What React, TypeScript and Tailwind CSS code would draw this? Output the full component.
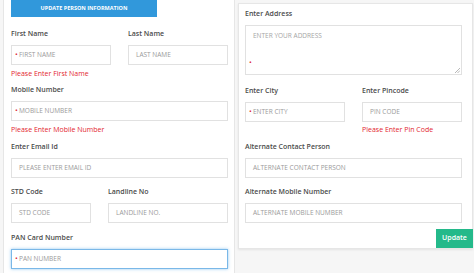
import React from "react";

// ─── Small pieces ────────────────────────────────────────────────────────────

const FONT = { fontFamily: "'Open Sans', 'Noto Sans', sans-serif" };

function Label({ children }: { children: React.ReactNode }) {
  return (
    <div className="h-[12px] leading-[12px] mb-[5px] text-[7px] font-semibold text-[#4b4b4b] whitespace-nowrap">
      {children}
    </div>
  );
}

function Field({
  placeholder,
  required = false,
  focused = false,
}: {
  placeholder: string;
  required?: boolean;
  focused?: boolean;
}) {
  const border = focused
    ? "border-[#7ab8e8] shadow-[0_0_3px_rgba(102,175,233,0.7)]"
    : "border-[#e1e1e1]";
  return (
    <div
      className={`h-[20px] w-full flex items-center border bg-white text-[6.5px] text-[#9a9a9a] uppercase whitespace-nowrap ${border} ${
        required ? "pl-[3px]" : "pl-[7px]"
      }`}
    >
      {required && <span className="text-[#e0313b] w-[4px] text-[7.5px] leading-none">•</span>}
      <span>{placeholder}</span>
    </div>
  );
}

function Error({ children }: { children: React.ReactNode }) {
  return (
    <div className="mt-[4px] h-[10px] leading-[10px] text-[7px] text-[#e3262f] whitespace-nowrap">
      {children}
    </div>
  );
}

// ─── Main ────────────────────────────────────────────────────────────────────

export default function App() {
  return (
    <div className="w-[474px] h-[273px] overflow-hidden bg-[#f6f6f6] flex gap-[3px] pl-[3px]" style={FONT}>
      {/* Left card */}
      <section className="w-[232px] h-[290px] bg-white border border-t-0 border-[#e6e6e6] pl-[7px] pr-[6px] shrink-0">
        <div className="w-[146px] h-[17px] bg-[#3198db] flex items-center justify-center text-white text-[5.5px] font-bold uppercase">
          Update Person Information
        </div>

        <div className="mt-[11px] grid grid-cols-[100px_100px] gap-x-[17px]">
          <div>
            <Label>First Name</Label>
            <Field placeholder="First Name" required />
          </div>
          <div>
            <Label>Last Name</Label>
            <Field placeholder="Last Name" />
          </div>
        </div>
        <Error>Please Enter First Name</Error>

        <div className="mt-[5px]">
          <Label>Mobile Number</Label>
          <Field placeholder="Mobile Number" required />
          <Error>Please Enter Mobile Number</Error>
        </div>

        <div className="mt-[6px]">
          <Label>Enter Email Id</Label>
          <Field placeholder="Please Enter Email Id" />
        </div>

        <div className="mt-[8px] grid grid-cols-[80px_120px] gap-x-[17px]">
          <div>
            <Label>STD Code</Label>
            <Field placeholder="STD Code" />
          </div>
          <div>
            <Label>Landline No</Label>
            <Field placeholder="Landline No." />
          </div>
        </div>

        <div className="mt-[9px]">
          <Label>PAN Card Number</Label>
          <Field placeholder="Pan Number" required focused />
        </div>
      </section>

      {/* Right card */}
      <section className="mt-[3px] w-[235px] h-[246px] bg-white border border-[#e6e6e6] shadow-[0_1px_2px_rgba(0,0,0,0.08)] pl-[6px] flex flex-col shrink-0">
        <div className="pr-[10px]">
          <div className="mt-[4px]">
            <Label>Enter Address</Label>
            <div className="relative h-[50px] border border-[#e1e1e1] bg-white pl-[7px] pt-[5px] text-[6.5px] text-[#a5a5a5] uppercase">
              Enter your address
              <span className="absolute left-[3px] bottom-[8px] text-[#e0313b] text-[7.5px] leading-none">•</span>
              <svg className="absolute right-[1px] bottom-[1px]" width="5" height="5" viewBox="0 0 5 5">
                <path d="M5 0L0 5M5 2.5L2.5 5" stroke="#9a9a9a" strokeWidth="0.7" />
              </svg>
            </div>
          </div>

          <div className="mt-[10px] grid grid-cols-[100px_100px] gap-x-[17px]">
            <div>
              <Label>Enter City</Label>
              <Field placeholder="Enter City" required />
            </div>
            <div>
              <Label>Enter Pincode</Label>
              <Field placeholder="Pin Code" />
              <div className="mt-[3px] h-[10px] leading-[10px] text-[7px] text-[#e3262f] whitespace-nowrap">
                Please Enter Pin Code
              </div>
            </div>
          </div>

          <div className="mt-[6px]">
            <Label>Alternate Contact Person</Label>
            <Field placeholder="Alternate Contact Person" />
          </div>

          <div className="mt-[8px]">
            <Label>Alternate Mobile Number</Label>
            <Field placeholder="Alternate Mobile Number" />
          </div>
        </div>

        <div className="mt-auto flex justify-end">
          <button className="w-[37px] h-[19px] bg-[#24b98a] text-white text-[7px] font-semibold -mr-px">
            Update
          </button>
        </div>
      </section>
    </div>
  );
}
